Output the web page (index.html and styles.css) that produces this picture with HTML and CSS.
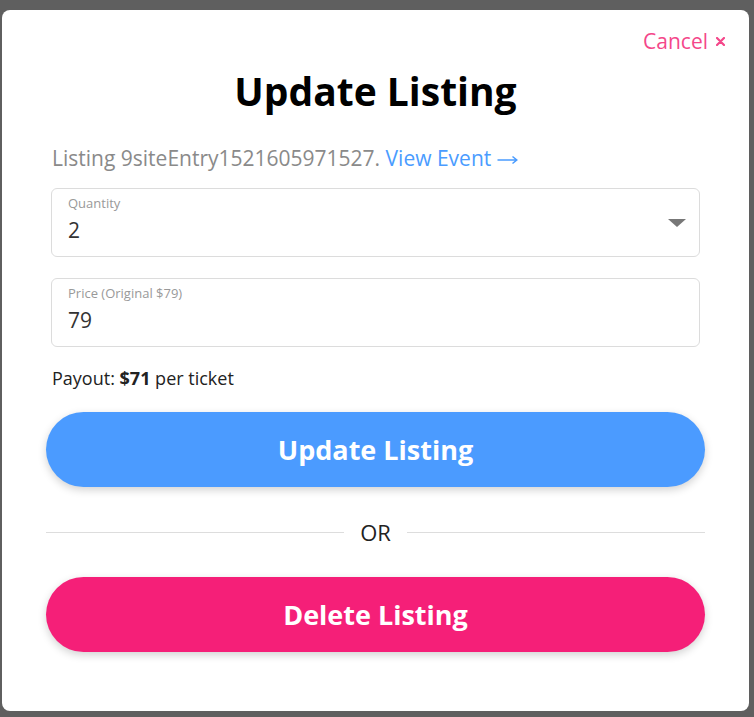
FILE: index.html
```html
<!DOCTYPE html>
<html lang="en">
<head>
<meta charset="utf-8">
<title>Update Listing</title>
<link rel="stylesheet" href="styles.css">
</head>
<body>
<div class="modal">
  <div class="cancel-row">
    <a class="cancel" href="#">Cancel <svg class="cancel-x" width="9" height="9" viewBox="0 0 9 9"><path d="M1 1 L8 8 M8 1 L1 8" stroke="#f4478a" stroke-width="2.2" stroke-linecap="round"/></svg></a>
  </div>
  <h1 class="title">Update Listing</h1>
  <div class="form">
    <p class="listing">Listing 9siteEntry1521605971527. <a class="view" href="#">View Event <svg class="arrow" width="21" height="10" viewBox="0 0 21 10"><path d="M0.5 5 H19.5 M15.5 1.5 L19.8 5 L15.5 8.5" fill="none" stroke="#4a9cff" stroke-width="1.5"/></svg></a></p>
    <div class="field">
      <span class="field-label">Quantity</span>
      <span class="field-value">2</span>
      <svg class="caret" width="20" height="10" viewBox="0 0 20 10"><path d="M1 1 H19 L10 9 Z" fill="#777"/></svg>
    </div>
    <div class="field">
      <span class="field-label">Price (Original $79)</span>
      <span class="field-value">79</span>
    </div>
    <p class="payout">Payout: <b>$71</b> per ticket</p>
  </div>
  <div class="actions">
    <button class="btn btn-update">Update Listing</button>
    <div class="divider"><span class="line"></span><span class="or">OR</span><span class="line"></span></div>
    <button class="btn btn-delete">Delete Listing</button>
  </div>
</div>
</body>
</html>
```
FILE: styles.css
```css
html, body {
  margin: 0;
  padding: 0;
}
body {
  background: #5f5f5f;
  width: 754px;
  height: 717px;
  padding: 10px 0 0 2px;
  box-sizing: border-box;
  font-family: "Open Sans", "Noto Sans", sans-serif;
  overflow: hidden;
}
.modal {
  width: 747px;
  height: 701px;
  background: #fff;
  border-radius: 8px;
  box-sizing: border-box;
  padding: 17px 44px 0 44px;
}
.cancel-row {
  display: flex;
  justify-content: flex-end;
  margin-right: -20px;
  height: 28px;
}
.cancel {
  color: #f4478a;
  text-decoration: none;
  font-size: 21px;
  line-height: 28px;
  display: flex;
  align-items: center;
  gap: 8px;
}
.cancel-x {
  display: block;
  margin-top: 1px;
}
.title {
  margin: 11px 0 0 0;
  text-align: center;
  font-size: 39px;
  font-weight: 700;
  line-height: 50px;
  color: #000;
}
.form {
  padding: 0 5px;
}
.listing {
  margin: 29px 0 0 1px;
  font-size: 21px;
  line-height: 26px;
  color: #8a8a8a;
}
.view {
  color: #4a9cff;
  text-decoration: none;
}
.arrow {
  vertical-align: 1px;
}
.field {
  position: relative;
  margin-top: 17px;
  height: 69px;
  border: 1px solid #dcdcdc;
  border-radius: 6px;
  box-sizing: border-box;
  padding: 6px 16px 0 16px;
  display: flex;
  flex-direction: column;
}
.field + .field {
  margin-top: 21px;
}
.field-label {
  font-size: 13px;
  line-height: 16px;
  color: #999;
}
.field-value {
  margin-top: 6px;
  font-size: 21px;
  line-height: 26px;
  color: #333;
}
.caret {
  position: absolute;
  right: 12px;
  top: 29px;
}
.payout {
  margin: 20px 0 0 1px;
  font-size: 18px;
  line-height: 22px;
  color: #222;
}
.actions {
  margin-top: 23px;
}
.btn {
  display: block;
  width: 100%;
  height: 75px;
  border: 0;
  border-radius: 38px;
  font-family: "Open Sans", "Noto Sans", sans-serif;
  font-size: 27px;
  font-weight: 700;
  color: #fff;
  box-shadow: 0 3px 8px rgba(0, 0, 0, 0.18);
  cursor: pointer;
}
.btn-update {
  background: #4b9bff;
}
.btn-delete {
  background: #f51f78;
}
.divider {
  display: flex;
  align-items: center;
  height: 90px;
}
.line {
  flex: 1;
  height: 1px;
  background: #dddddd;
}
.or {
  padding: 0 16px;
  font-size: 22px;
  color: #222;
}
```
